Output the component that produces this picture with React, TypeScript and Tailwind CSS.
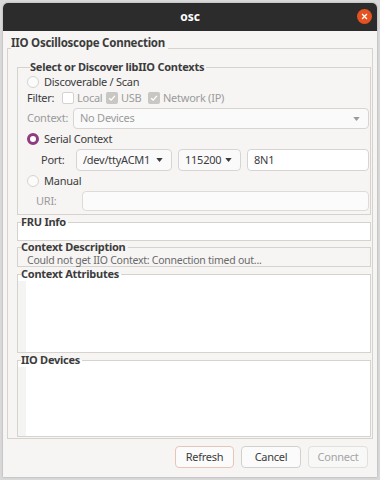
import React from 'react';

const Radio = ({ checked = false }: { checked?: boolean }) =>
  checked ? (
    <span className="block h-[12px] w-[12px] shrink-0 rounded-full border-[3.5px] border-[#8e3b80] bg-white" />
  ) : (
    <span className="block h-[12px] w-[12px] shrink-0 rounded-full border border-[#d6d3cf] bg-[#fbfbfb]" />
  );

const Check = ({ checked = false }: { checked?: boolean }) =>
  checked ? (
    <span className="flex h-[12px] w-[12px] shrink-0 items-center justify-center rounded-[2px] bg-[#c9c7c4]">
      <svg viewBox="0 0 12 12" className="h-[10px] w-[10px]">
        <path d="M2.5 6.2 L5 8.5 L9.5 3.5" fill="none" stroke="#fff" strokeWidth="1.6" />
      </svg>
    </span>
  ) : (
    <span className="block h-[12px] w-[12px] shrink-0 rounded-[2px] border border-[#d6d3cf] bg-white" />
  );

const Arrow = ({ dim = false }: { dim?: boolean }) => (
  <svg viewBox="0 0 8 5" className="h-[4px] w-[7px] shrink-0">
    <path d="M0 0 L8 0 L4 5 Z" fill={dim ? '#9a9a9a' : '#3d3d3d'} />
  </svg>
);

const Combo = ({ text, className = '', dim = false }: { text: string; className?: string; dim?: boolean }) => (
  <div
    className={`flex items-center justify-between rounded-[4px] border border-[#d8d5d1] bg-[#fafafa] pl-[6px] pr-[8px] ${
      dim ? 'text-[#9b9b9b]' : 'text-[#3c3c3c]'
    } ${className}`}
  >
    <span>{text}</span>
    <Arrow dim={dim} />
  </div>
);

const Frame = ({
  title,
  className = '',
  legendClass = 'leading-[14px]',
  children,
}: {
  title: string;
  className?: string;
  legendClass?: string;
  children?: React.ReactNode;
}) => (
  <fieldset className={`border border-[#d6d3cf] ${className}`}>
    <legend className={`ml-[3px] pr-[2px] text-[11px] font-bold text-[#3c3c3c] ${legendClass}`}>{title}</legend>
    {children}
  </fieldset>
);

export default function App() {
  return (
    <div className="h-[480px] w-[380px] overflow-hidden bg-[#d9d9d9] pt-[3px] pl-[3px] font-['Noto_Sans',sans-serif] text-[11px] tracking-[-0.25px] text-[#3c3c3c]">
      <div className="flex h-[474px] w-[374px] flex-col overflow-hidden rounded-t-[5px] bg-[#f6f5f4] shadow-[0_0_2px_rgba(0,0,0,0.3)]">
        {/* title bar */}
        <div className="relative flex h-[28px] shrink-0 items-center justify-center bg-[#2c2c2c]">
          <span className="text-[12px] font-bold tracking-normal text-white">osc</span>
          <span className="absolute right-[5px] top-[6px] flex h-[15px] w-[15px] items-center justify-center rounded-full bg-[#e4531f]">
            <svg viewBox="0 0 10 10" className="h-[7px] w-[7px]">
              <path d="M1.5 1.5 L8.5 8.5 M8.5 1.5 L1.5 8.5" stroke="#fff" strokeWidth="1.8" />
            </svg>
          </span>
        </div>

        <div className="flex flex-1 flex-col px-[4px] pt-[5px]">
          <fieldset className="border border-[#d6d3cf] pb-[1px]">
            <legend className="ml-[3px] pr-[3px] pb-[10px] text-[11.5px] font-bold leading-[14px] text-[#3c3c3c]">
              IIO Oscilloscope Connection
            </legend>

            <Frame title="Select or Discover libIIO Contexts" className="ml-[9px] mr-[1px] pb-[3px] pl-[9px] pr-[1px]">
              <div className="flex h-[16px] items-center gap-[5px]">
                <Radio />
                <span>Discoverable / Scan</span>
              </div>
              <div className="flex h-[16px] items-center">
                <span className="w-[35px]">Filter:</span>
                <div className="flex w-[44px] items-center gap-[3px] text-[#9b9b9b]">
                  <Check />
                  <span>Local</span>
                </div>
                <div className="flex w-[42px] items-center gap-[3px] text-[#9b9b9b]">
                  <Check checked />
                  <span>USB</span>
                </div>
                <div className="flex items-center gap-[3px] text-[#9b9b9b]">
                  <Check checked />
                  <span>Network (IP)</span>
                </div>
              </div>
              <div className="mt-[2px] flex h-[21px] items-center">
                <span className="w-[46px] text-[#9b9b9b]">Context:</span>
                <Combo text="No Devices" dim className="h-[21px] flex-1" />
              </div>
              <div className="mt-[2px] flex h-[16px] items-center gap-[5px]">
                <Radio checked />
                <span>Serial Context</span>
              </div>
              <div className="mt-[2px] flex h-[22px] items-center pl-[14px]">
                <span className="w-[35px]">Port:</span>
                <Combo text="/dev/ttyACM1" className="h-[22px] w-[96px]" />
                <Combo text="115200" className="ml-[6px] h-[22px] w-[63px]" />
                <div className="ml-[6px] flex h-[22px] flex-1 items-center rounded-[4px] border border-[#d8d5d1] bg-white pl-[6px]">
                  8N1
                </div>
              </div>
              <div className="mt-[2px] flex h-[16px] items-center gap-[5px]">
                <Radio />
                <span>Manual</span>
              </div>
              <div className="mt-[2px] flex h-[20px] items-center pl-[9px]">
                <span className="w-[46px] text-[#9b9b9b]">URI:</span>
                <div className="h-[20px] flex-1 rounded-[4px] border border-[#dedbd7] bg-[#fbfbfb]" />
              </div>
            </Frame>

            <Frame title="FRU Info" className="ml-[9px] mr-[1px] bg-white">
              <div className="h-[11px]" />
            </Frame>

            <Frame title="Context Description" legendClass="leading-[12px]" className="ml-[9px] mr-[1px]">
              <div className="h-[13px] pl-[9px] pt-[1px] text-[10.5px] leading-[12px] text-[#6a6a6a]">
                Could not get IIO Context: Connection timed out...
              </div>
            </Frame>

            <Frame title="Context Attributes" className="ml-[9px] mr-[1px] bg-white">
              <div className="flex h-[71px]">
                <div className="w-[8px] bg-[#f4f4f3]" />
                <div className="flex-1" />
              </div>
            </Frame>

            <Frame title="IIO Devices" className="ml-[9px] mr-[1px] bg-white">
              <div className="flex h-[69px]">
                <div className="w-[8px] bg-[#f4f4f3]" />
                <div className="flex-1" />
              </div>
            </Frame>
          </fieldset>

          <div className="mt-[7px] flex justify-end gap-[7px] pr-[5px]">
            <button className="h-[22px] w-[59px] rounded-[4px] border border-[#e8c6b6] bg-[#fbfbfb] text-[11px] text-[#3c3c3c]">
              Refresh
            </button>
            <button className="h-[22px] w-[60px] rounded-[4px] border border-[#d3d0cc] bg-[#fbfbfb] text-[11px] text-[#3c3c3c]">
              Cancel
            </button>
            <button className="h-[22px] w-[60px] rounded-[4px] border border-[#e2e0dd] bg-[#f8f8f7] text-[11px] text-[#a5a5a5]">
              Connect
            </button>
          </div>
        </div>
      </div>
    </div>
  );
}
